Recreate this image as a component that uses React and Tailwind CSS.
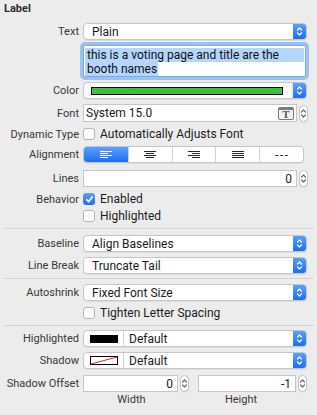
import React from 'react';

function Chevrons({ color = "#fff" }) {
  return (
    <svg width="7" height="11" viewBox="0 0 7 11" fill="none" stroke={color} strokeWidth="1.2" strokeLinecap="round" strokeLinejoin="round">
      <path d="M1.5 4 L3.5 2 L5.5 4" />
      <path d="M1.5 7 L3.5 9 L5.5 7" />
    </svg>
  );
}

function BlueArrows() {
  return (
    <div className="w-[13px] h-full bg-linear-to-b from-[#5aa0fa] to-[#1b6ef1] flex items-center justify-center">
      <Chevrons />
    </div>
  );
}

function Stepper() {
  return (
    <div className="ml-[2px] w-[9px] h-[17px] rounded-full border border-[#c3c3c3] bg-white flex items-center justify-center shadow-[0_1px_0_rgba(0,0,0,0.05)]">
      <Chevrons color="#6a6a6a" />
    </div>
  );
}

function Popup({ children }) {
  return (
    <div className="flex h-[17px] w-[224px] rounded-[4px] border border-[#c6c6c6] bg-white overflow-hidden shadow-[0_1px_0_rgba(0,0,0,0.06)]">
      <div className="flex-1 flex items-center pl-[8px] text-[12px] text-[#1c1c1c] leading-none">{children}</div>
      <BlueArrows />
    </div>
  );
}

function ColorPopup({ swatch, text }) {
  return (
    <div className="flex h-[17px] w-[224px] rounded-[4px] border border-[#c6c6c6] bg-white overflow-hidden shadow-[0_1px_0_rgba(0,0,0,0.06)]">
      <div className="w-[40px] flex items-center justify-center border-r border-[#d0d0d0]">{swatch}</div>
      <div className="flex-1 flex items-center pl-[5px] text-[12px] text-[#1c1c1c] leading-none">{text}</div>
      <BlueArrows />
    </div>
  );
}

function Check({ on }) {
  if (on) {
    return (
      <div className="w-[12px] h-[12px] rounded-[3px] bg-linear-to-b from-[#5aa0fa] to-[#1b6ef1] flex items-center justify-center">
        <svg width="9" height="9" viewBox="0 0 9 9" fill="none" stroke="#fff" strokeWidth="1.6" strokeLinecap="round" strokeLinejoin="round">
          <path d="M1.8 4.8 L3.7 6.8 L7.3 2" />
        </svg>
      </div>
    );
  }
  return <div className="w-[12px] h-[12px] rounded-[3px] border border-[#b5b5b5] bg-white" />;
}

function Row({ label, children, className = "" }) {
  return (
    <div className={`flex items-center ${className}`}>
      <div className="w-[79px] shrink-0 text-right text-[11px] text-[#383838] leading-none">{label}</div>
      <div className="ml-[4px] flex items-center">{children}</div>
    </div>
  );
}

function CheckRow({ label, text, on, className = "" }) {
  return (
    <Row label={label} className={`h-[14px] ${className}`}>
      <Check on={on} />
      <span className="ml-[5px] text-[12px] text-[#1c1c1c] leading-none">{text}</span>
    </Row>
  );
}

function AlignIcon({ kind, color }) {
  const widths = kind === "justify" ? [12, 12, 12, 12] : [12, 8, 12, 8];
  return (
    <svg width="12" height="8" viewBox="0 0 12 8" stroke={color} strokeWidth="1">
      {widths.map((w, i) => {
        let x1 = 0;
        if (kind === "center") x1 = (12 - w) / 2;
        if (kind === "right") x1 = 12 - w;
        return <line key={i} x1={x1} x2={x1 + w} y1={0.5 + i * 2} y2={0.5 + i * 2} />;
      })}
    </svg>
  );
}

function Separator({ className = "" }) {
  return <div className={`h-px bg-[#d3d3d3] mx-[4px] ${className}`} />;
}

export default function App() {
  return (
    <div className="w-[317px] h-[415px] bg-[#ececec] font-['Roboto','Liberation_Sans',sans-serif] overflow-hidden">
      <div className="h-[18px] flex items-center pl-[4px] text-[11px] font-bold text-[#2e2e2e]">Label</div>

      <Row label="Text" className="mt-[5px]">
        <Popup>Plain</Popup>
      </Row>

      <Row className="mt-[5px]">
        <div className="w-[223px] h-[32px] bg-white border border-[#7ea9e6] rounded-[2px] ring-[3px] ring-[#9cc2f3] pl-px pt-[2px] text-[12px] leading-[14px] text-[#111]">
          <div className="bg-[#b4d6fd] pl-[2px] mr-[1px] whitespace-nowrap">this is a voting page and title are the</div>
          <div className="pl-[2px]"><span className="bg-[#b4d6fd] -ml-[2px] pl-[2px] pr-px">booth names</span></div>
        </div>
      </Row>

      <Row label="Color" className="mt-[5px]">
        <div className="flex h-[17px] w-[224px] rounded-[4px] border border-[#c6c6c6] bg-white overflow-hidden shadow-[0_1px_0_rgba(0,0,0,0.06)]">
          <div className="flex-1 flex items-center pl-[7px] pr-[8px]">
            <div className="h-[8px] w-full bg-[#3cc23a] border border-black" />
          </div>
          <div className="w-[2px] bg-[#ececec]" />
          <BlueArrows />
        </div>
      </Row>

      <Row label="Font" className="mt-[5px]">
        <div className="w-[214px] h-[18px] bg-white border border-[#c6c6c6] flex items-center pl-[2px] pr-[2px] text-[12px] text-[#1c1c1c] leading-none">
          <span className="flex-1">System 15.0</span>
          <div className="w-[16px] h-[13px] rounded-[2px] border border-[#7b7b7b] border-t-[3px] bg-[#f2f2f2] flex items-center justify-center font-['Liberation_Serif',serif] font-bold text-[11px] text-[#555] leading-none">T</div>
        </div>
        <Stepper />
      </Row>

      <CheckRow label="Dynamic Type" text="Automatically Adjusts Font" className="mt-[5px]" />

      <Row label="Alignment" className="mt-[5px]">
        <div className="grid grid-cols-5 w-[221px] h-[17px] rounded-[4px] border border-[#c6c6c6] bg-white overflow-hidden shadow-[0_1px_0_rgba(0,0,0,0.06)]">
          <div className="bg-linear-to-b from-[#5aa0fa] to-[#1b6ef1] flex items-center justify-center">
            <AlignIcon kind="left" color="#fff" />
          </div>
          <div className="border-l border-[#d0d0d0] flex items-center justify-center"><AlignIcon kind="center" color="#2a2a2a" /></div>
          <div className="border-l border-[#d0d0d0] flex items-center justify-center"><AlignIcon kind="right" color="#2a2a2a" /></div>
          <div className="border-l border-[#d0d0d0] flex items-center justify-center"><AlignIcon kind="justify" color="#2a2a2a" /></div>
          <div className="border-l border-[#d0d0d0] flex items-center justify-center text-[12px] tracking-[1.5px] pl-[1.5px] text-[#2a2a2a] leading-none">---</div>
        </div>
      </Row>

      <Row label="Lines" className="mt-[7px]">
        <div className="w-[214px] h-[17px] bg-white border border-[#c6c6c6] flex items-center justify-end pr-[4px] text-[12px] text-[#1c1c1c] leading-none">0</div>
        <Stepper />
      </Row>

      <CheckRow label="Behavior" text="Enabled" on className="mt-[5px]" />
      <CheckRow label="" text="Highlighted" className="mt-[3px]" />

      <Separator className="mt-[5px]" />

      <Row label="Baseline" className="mt-[6px]">
        <Popup>Align Baselines</Popup>
      </Row>
      <Row label="Line Break" className="mt-[5px]">
        <Popup>Truncate Tail</Popup>
      </Row>

      <Separator className="mt-[4px]" />

      <Row label="Autoshrink" className="mt-[5px]">
        <Popup>Fixed Font Size</Popup>
      </Row>
      <CheckRow label="" text="Tighten Letter Spacing" className="mt-[5px]" />

      <Separator className="mt-[5px]" />

      <Row label="Highlighted" className="mt-[4px]">
        <ColorPopup swatch={<div className="w-[28px] h-[8px] bg-black" />} text="Default" />
      </Row>
      <Row label="Shadow" className="mt-[5px]">
        <ColorPopup
          swatch={
            <svg width="28" height="9" viewBox="0 0 28 9">
              <rect x="0.5" y="0.5" width="27" height="8" fill="#fff" stroke="#000" />
              <line x1="1" y1="8" x2="27" y2="1" stroke="#d0242a" strokeWidth="1" />
            </svg>
          }
          text="Default"
        />
      </Row>

      <Row label="Shadow Offset" className="mt-[6px]">
        <div className="w-[95px] h-[17px] bg-white border border-[#c6c6c6] flex items-center justify-end pr-[4px] text-[12px] text-[#1c1c1c] leading-none">0</div>
        <Stepper />
        <div className="ml-[9px] w-[98px] h-[17px] bg-white border border-[#c6c6c6] flex items-center justify-end pr-[4px] text-[12px] text-[#1c1c1c] leading-none">-1</div>
        <Stepper />
      </Row>
      <div className="mt-[1px] flex h-[12px] items-center text-[11px] text-[#383838] leading-none">
        <div className="ml-[83px] w-[97px] text-center">Width</div>
        <div className="ml-[19px] w-[84px] text-center">Height</div>
      </div>
    </div>
  );
}
